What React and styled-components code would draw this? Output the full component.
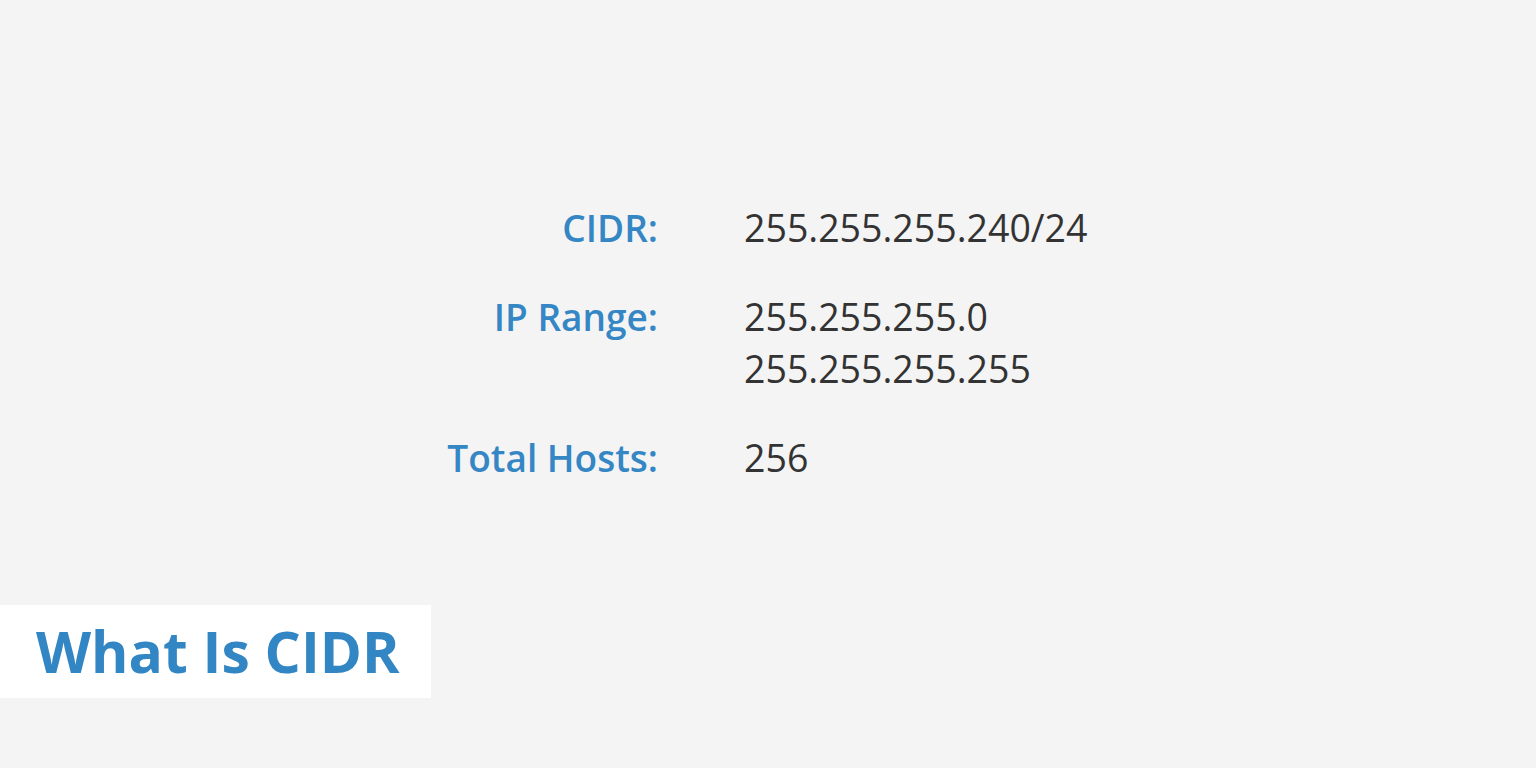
import styled, { createGlobalStyle } from "styled-components";

const GlobalStyle = createGlobalStyle`
  html, body {
    margin: 0;
    padding: 0;
    background: #f4f4f4;
  }
  body {
    font-family: "Open Sans", "Liberation Sans", sans-serif;
  }
`;

const Page = styled.div`
  width: 1536px;
  height: 768px;
  display: flex;
  flex-direction: column;
  background: #f4f4f4;
  overflow: hidden;
`;

const InfoGrid = styled.dl`
  display: grid;
  grid-template-columns: 258px auto;
  column-gap: 86px;
  row-gap: 37px;
  margin: 202px 0 0 400px;
  align-items: start;
`;

const Label = styled.dt`
  margin: 0;
  text-align: right;
  font-size: 37px;
  font-weight: 600;
  line-height: 52px;
  color: #3486c4;
`;

const Value = styled.dd`
  margin: 0;
  font-size: 37.5px;
  font-weight: 400;
  line-height: 52px;
  color: #333333;
`;

const TitleBox = styled.div`
  margin-top: auto;
  margin-bottom: 70px;
  width: 431px;
  height: 93px;
  background: #ffffff;
  display: flex;
  align-items: center;
  padding-left: 36px;
  box-sizing: border-box;
`;

const Title = styled.h1`
  margin: 0;
  font-size: 57px;
  font-weight: 700;
  color: #3286c3;
  line-height: 1;
`;

const rows = [
  { label: "CIDR:", values: ["255.255.255.240/24"] },
  { label: "IP Range:", values: ["255.255.255.0", "255.255.255.255"] },
  { label: "Total Hosts:", values: ["256"] },
];

export default function App() {
  return (
    <>
      <GlobalStyle />
      <Page>
        <InfoGrid>
          {rows.map((row) => (
            <>
              <Label key={row.label}>{row.label}</Label>
              <Value key={row.label + "-v"}>
                {row.values.map((v) => (
                  <div key={v}>{v}</div>
                ))}
              </Value>
            </>
          ))}
        </InfoGrid>
        <TitleBox>
          <Title>What Is CIDR</Title>
        </TitleBox>
      </Page>
    </>
  );
}
